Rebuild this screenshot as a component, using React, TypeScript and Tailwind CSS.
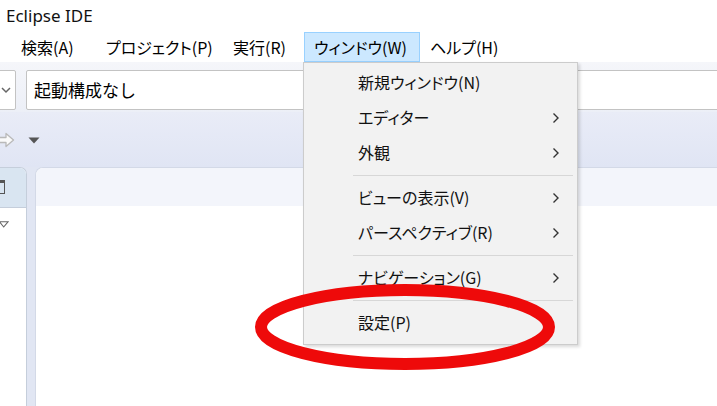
import React from 'react';

const jp = { fontFamily: '"Noto Sans CJK JP", "Noto Sans", sans-serif', fontFeatureSettings: '"palt"' };

const menuBar = [
    { label: '検索(A)', w: 'w-[85px]' },
    { label: 'プロジェクト(P)', w: 'w-[127px]' },
    { label: '実行(R)', w: 'w-[81px]' },
    { label: 'ウィンドウ(W)', w: 'w-[116px]', active: true },
    { label: 'ヘルプ(H)', w: 'w-[100px]' },
];

type Entry = { label: string; sub?: boolean } | 'sep';

const windowMenu: Entry[] = [
    { label: '新規ウィンドウ(N)' },
    { label: 'エディター', sub: true },
    { label: '外観', sub: true },
    'sep',
    { label: 'ビューの表示(V)', sub: true },
    { label: 'パースペクティブ(R)', sub: true },
    'sep',
    { label: 'ナビゲーション(G)', sub: true },
    'sep',
    { label: '設定(P)' },
];

function Chevron() {
    return (
        <svg width="8" height="12" viewBox="0 0 8 12" className="text-[#333]">
            <polyline points="1.5,1.5 6,6 1.5,10.5" fill="none" stroke="currentColor" strokeWidth="1.4" />
        </svg>
    );
}

function WindowMenu() {
    return (
        <div
            className="absolute left-[303px] top-[62px] w-[275px] bg-[#f2f2f2] border border-[#cccccc] shadow-[2px_2px_3px_rgba(0,0,0,0.15)] pt-[2px] pb-[4px] text-[16px] text-[#111]"
            style={jp}
        >
            {windowMenu.map((item, i) =>
                item === 'sep' ? (
                    <div key={i} className="h-[10px] flex items-center pl-[49px] pr-[4px]">
                        <div className="h-px w-full bg-[#d7d7d7]" />
                    </div>
                ) : (
                    <div key={i} className="h-[35px] flex items-center pl-[54px] pr-[17px] whitespace-nowrap">
                        <span className="flex-1 pb-[1px]">{item.label}</span>
                        {item.sub && <Chevron />}
                    </div>
                )
            )}
        </div>
    );
}

export default function App() {
    return (
        <div className="relative w-[717px] h-[406px] overflow-hidden bg-white text-black">
            {/* title */}
            <div className="h-[32px] flex items-center pl-[6px] text-[17px] text-[#111]" style={{ fontFamily: '"Noto Sans", sans-serif' }}>
                Eclipse IDE
            </div>

            {/* menu bar */}
            <div className="h-[30px] flex items-stretch pl-[11px] text-[16px] whitespace-nowrap" style={jp}>
                {menuBar.map(m => (
                    <div
                        key={m.label}
                        className={`${m.w} shrink-0 flex items-center px-[9px] pb-[1px] border ${m.active ? 'bg-[#cce8ff] border-[#99d1ff]' : 'border-transparent'}`}
                    >
                        {m.label}
                    </div>
                ))}
            </div>

            {/* toolbar 1 */}
            <div className="h-[50px] bg-gradient-to-b from-[#f5f6fa] to-[#eceff7] flex pt-[8px] pb-[2px]">
                <div className="ml-[-14px] w-[30px] h-[40px] shrink-0 bg-white border border-[#c3c3c3] rounded-[2px] flex items-center justify-end pr-[4px]">
                    <svg width="10" height="8" viewBox="0 0 10 8">
                        <polyline points="1,2 5,6 9,2" fill="none" stroke="#666" strokeWidth="1.5" />
                    </svg>
                </div>
                <div
                    className="ml-[10px] mr-[-10px] flex-1 h-[40px] bg-white border border-[#c3c3c3] rounded-[2px] flex items-center pl-[7px] text-[17px]"
                    style={{ fontFamily: '"Noto Sans CJK JP", sans-serif' }}
                >
                    起動構成なし
                </div>
            </div>

            {/* toolbar 2 */}
            <div className="h-[55px] bg-gradient-to-b from-[#e9ecf7] to-[#e0e5f4] flex items-center pt-[1px]">
                <svg width="18" height="18" viewBox="0 0 18 18" className="ml-[-3px]">
                    <path d="M1 6.5 H9 V2.5 L16.5 9 L9 15.5 V11.5 H1 Z" fill="#fafafa" stroke="#b9b9b9" strokeWidth="1.3" strokeLinejoin="round" />
                </svg>
                <svg width="12" height="7" viewBox="0 0 12 7" className="ml-[13px]">
                    <polygon points="0.5,0.5 11.5,0.5 6,6.5" fill="#555" />
                </svg>
            </div>

            {/* workbench */}
            <div className="flex h-[239px] bg-[#e1e6f3]">
                <div className="w-[27px] shrink-0 flex flex-col bg-white border-r border-t border-[#c5cedb] rounded-tr-[7px] overflow-hidden">
                    <div className="h-[40px] bg-[#d9e5f1] border-b border-[#c5cedb] flex items-center">
                        <div className="ml-[-8px] w-[13px] h-[14px] border-[1.5px] border-[#555] border-t-[3px] mt-[-2px]" />
                    </div>
                    <svg width="10" height="7" viewBox="0 0 10 7" className="ml-[-1px] mt-[13px]">
                        <polygon points="0.5,0.8 9,0.8 4.7,6" fill="none" stroke="#666" strokeWidth="1.1" />
                    </svg>
                </div>
                <div className="ml-[8px] flex-1 flex flex-col bg-white border-l border-t border-[#d3d9e7] rounded-tl-[8px] overflow-hidden">
                    <div className="h-[38px] bg-[#f3f5fb]" />
                    <div className="flex-1 bg-white" />
                </div>
            </div>

            <WindowMenu />

            {/* annotation */}
            <svg className="absolute left-0 top-0 pointer-events-none" width="717" height="406">
                <ellipse cx="405" cy="327" rx="144" ry="37" fill="none" stroke="#ee0a0a" strokeWidth="12" />
            </svg>
        </div>
    );
}
